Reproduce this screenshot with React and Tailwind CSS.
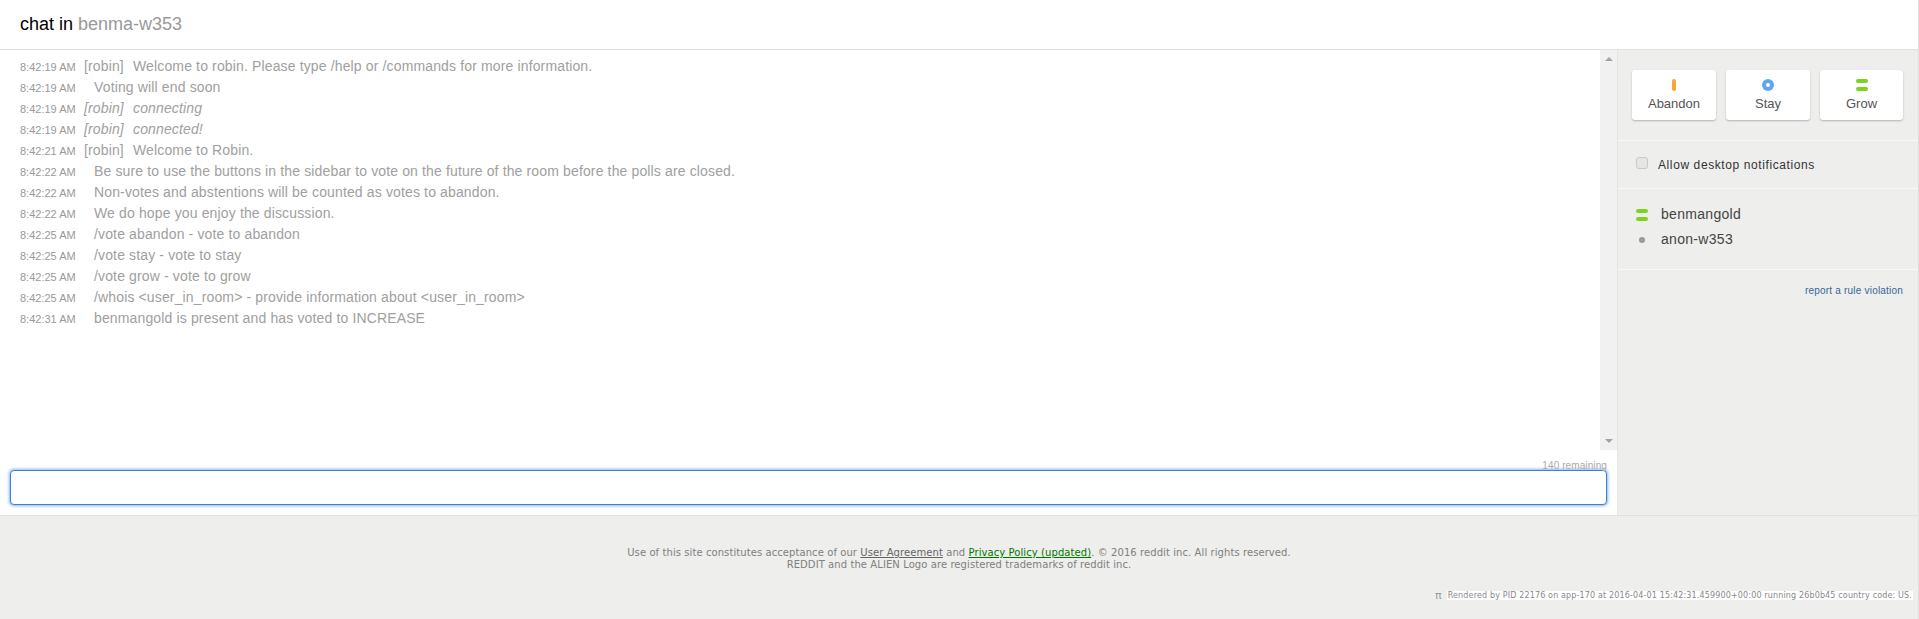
import React from "react";

const messages = [
  { time: "8:42:19 AM", from: "[robin]", text: "Welcome to robin. Please type /help or /commands for more information." },
  { time: "8:42:19 AM", text: "Voting will end soon" },
  { time: "8:42:19 AM", from: "[robin]", text: "connecting", italic: true },
  { time: "8:42:19 AM", from: "[robin]", text: "connected!", italic: true },
  { time: "8:42:21 AM", from: "[robin]", text: "Welcome to Robin." },
  { time: "8:42:22 AM", text: "Be sure to use the buttons in the sidebar to vote on the future of the room before the polls are closed." },
  { time: "8:42:22 AM", text: "Non-votes and abstentions will be counted as votes to abandon." },
  { time: "8:42:22 AM", text: "We do hope you enjoy the discussion." },
  { time: "8:42:25 AM", text: "/vote abandon - vote to abandon" },
  { time: "8:42:25 AM", text: "/vote stay - vote to stay" },
  { time: "8:42:25 AM", text: "/vote grow - vote to grow" },
  { time: "8:42:25 AM", text: "/whois <user_in_room> - provide information about <user_in_room>" },
  { time: "8:42:31 AM", text: "benmangold is present and has voted to INCREASE" },
];

const AbandonIcon = () => <div className="w-1 h-3 rounded-full bg-[#f5a833]" />;

const StayIcon = () => (
  <div className="w-3 h-3 rounded-full bg-[#60a5f5] flex items-center justify-center">
    <div className="w-1 h-1 rounded-full bg-white" />
  </div>
);

const GrowIcon = () => (
  <div className="flex flex-col gap-1">
    <div className="w-3 h-1 rounded-full bg-[#7ed321]" />
    <div className="w-3 h-1 rounded-full bg-[#7ed321]" />
  </div>
);

const VoteButton = ({ icon, label, width }) => (
  <button className={`${width} h-[50px] bg-white rounded-[3px] shadow-[0_1px_2px_rgba(0,0,0,0.25)] flex flex-col items-center pt-[9px] text-[13px] leading-[16px] text-[#555]`}>
    <div className="h-3 flex items-center">{icon}</div>
    <div className="mt-[5px]">{label}</div>
  </button>
);

const App = () => {
  return (
    <div className="w-[1919px] h-[619px] flex flex-col bg-[#eeeeed] overflow-hidden border-r border-[#e0e0e0] font-['Liberation_Sans',sans-serif]">
      <div className="h-[50px] shrink-0 bg-white border-b border-[#e2e2e2] pl-5 flex items-center text-[18px]">
        <span className="text-black">chat in&nbsp;</span>
        <span className="text-[#999]">benma-w353</span>
      </div>

      <div className="h-[466px] shrink-0 flex border-b border-[#e2e2e2]">
        <div className="w-[1618px] shrink-0 bg-white flex flex-col border-r border-[#e6e6e6]">
          <div className="h-[400px] shrink-0 flex">
            <div className="flex-1 pt-[6px] pl-5">
              {messages.map((m, i) => (
                <div key={i} className={`h-[21px] flex items-center text-[14px] tracking-[0.14px] text-[#a0a0a0] ${m.italic ? "italic" : ""}`}>
                  <span className="w-16 shrink-0 mt-[1px] text-[11px] tracking-normal not-italic text-[#999]">{m.time}</span>
                  {m.from ? (
                    <>
                      <span className="w-[49px] shrink-0">{m.from}</span>
                      <span>{m.text}</span>
                    </>
                  ) : (
                    <span className="pl-[10px]">{m.text}</span>
                  )}
                </div>
              ))}
            </div>
            <div className="w-[17px] shrink-0 bg-[#f1f1f1] flex flex-col items-center justify-between py-[7px]">
              <div className="w-0 h-0 border-x-[4px] border-x-transparent border-b-[4px] border-b-[#a3a3a3]" />
              <div className="w-0 h-0 border-x-[4px] border-x-transparent border-t-[4px] border-t-[#a3a3a3]" />
            </div>
          </div>
          <div className="px-[10px]">
            <div className="h-[20px] flex items-end justify-end text-[10px] leading-[9px] tracking-[0.1px] text-[#aaa]">140 remaining</div>
            <div className="h-[35px] rounded-[4px] border border-[#3b82dc] shadow-[0_0_3px_1px_rgba(59,130,220,0.6)] bg-white" />
          </div>
        </div>

        <div className="flex-1 min-w-0 flex flex-col">
          <div className="h-[91px] shrink-0 border-b border-[#f8f8f8] pt-[20px] pl-[14px] flex gap-[10px]">
            <VoteButton icon={<AbandonIcon />} label="Abandon" width="w-[84px]" />
            <VoteButton icon={<StayIcon />} label="Stay" width="w-[84px]" />
            <VoteButton icon={<GrowIcon />} label="Grow" width="w-[83px]" />
          </div>
          <div className="h-[48px] shrink-0 border-b border-[#f8f8f8] pl-[18px] pt-[16px] flex items-start">
            <div className="w-3 h-3 rounded-[3px] border border-[#c8c8c8] bg-[#e6e6e6]" />
            <span className="ml-[10px] mt-[1px] text-[12px] leading-[14px] tracking-[0.6px] text-[#333]">Allow desktop notifications</span>
          </div>
          <div className="h-[81px] shrink-0 border-b border-[#f8f8f8] pt-[13px] pl-[18px] text-[14px] tracking-[0.3px] text-[#444]">
            <div className="h-[25px] flex items-center">
              <div className="w-3 flex justify-center"><GrowIcon /></div>
              <span className="ml-[13px]">benmangold</span>
            </div>
            <div className="h-[25px] flex items-center">
              <div className="w-3 flex justify-center"><div className="w-[6px] h-[6px] rounded-full bg-[#999]" /></div>
              <span className="ml-[13px]">anon-w353</span>
            </div>
          </div>
          <div className="pt-[14px] pr-[15px] text-right text-[10px] leading-[14px] tracking-[0.2px] text-[#369]">report a rule violation</div>
        </div>
      </div>

      <div className="flex-1 min-h-0 flex flex-col font-['DejaVu_Sans',sans-serif] text-[10px] leading-[12px] tracking-[0.08px] text-[#808080]">
        <div className="pt-[31px] text-center">
          <div>
            Use of this site constitutes acceptance of our <a className="underline text-[#666]">User Agreement</a> and <a className="underline text-[#070]">Privacy Policy (updated)</a>. © 2016 reddit inc. All rights reserved.
          </div>
          <div>REDDIT and the ALIEN Logo are registered trademarks of reddit inc.</div>
        </div>
        <div className="mt-[20px] pr-[5px] flex justify-end items-center text-[8px] leading-[9px] tracking-[0.15px]">
          <span className="mr-[5px] text-[11px] text-[#999]">π</span>
          <span className="bg-white px-[1px] text-[#888]">Rendered by PID 22176 on app-170 at 2016-04-01 15:42:31.459900+00:00 running 26b0b45 country code: US.</span>
        </div>
      </div>
    </div>
  );
};

export default App;
